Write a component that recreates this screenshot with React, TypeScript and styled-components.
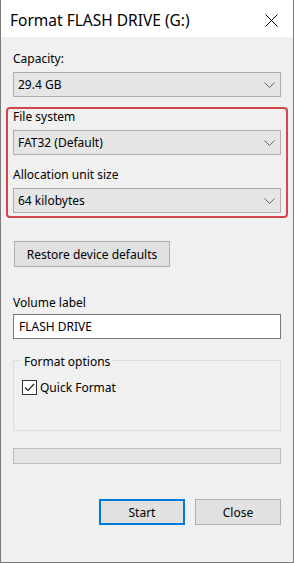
import styled, {createGlobalStyle} from 'styled-components';

const GlobalStyle = createGlobalStyle`
  html, body {
    margin: 0;
    padding: 0;
    background: #ffffff;
  }
  body {
    font-family: 'Noto Sans', 'Open Sans', sans-serif;
    font-size: 12px;
    color: #000000;
  }
`;

const Window = styled('div')`
  width: 294px;
  height: 563px;
  box-sizing: border-box;
  border: 1px solid #7a7a7a;
  border-top: none;
  background: #f0f0f0;
  display: flex;
  flex-direction: column;
`;

const TitleBar = styled('div')`
  height: 37px;
  background: #ffffff;
  display: flex;
  align-items: center;
  justify-content: space-between;
  padding: 3px 15px 0 9px;
  box-sizing: border-box;
`;

const Title = styled('div')`
  font-size: 15.5px;
  color: #000000;
`;

const Body = styled('div')`
  display: flex;
  flex-direction: column;
  padding: 14px 12px 0 12px;
`;

const Label = styled('div')<{$gap?: number}>`
  line-height: 16px;
  height: 16px;
  margin-top: ${(p) => p.$gap ?? 0}px;
  margin-bottom: 5px;
`;

const SelectBox = styled('div')`
  height: 25px;
  box-sizing: border-box;
  background: #e5e5e5;
  border: 1px solid #adadad;
  display: flex;
  align-items: center;
  justify-content: space-between;
  padding: 0 5px 0 4px;
`;

const Highlight = styled('div')`
  margin: 10px -7px 0 -7px;
  padding: 0 5px 3px 5px;
  border: 2px solid #d2454b;
  border-radius: 4px;
  display: flex;
  flex-direction: column;
`;

const Button = styled('div')<{$primary?: boolean; $width: number}>`
  width: ${(p) => p.$width}px;
  height: 26px;
  box-sizing: border-box;
  background: #e1e1e1;
  border: ${(p) => (p.$primary ? '2px solid #0078d7' : '1px solid #adadad')};
  display: flex;
  align-items: center;
  justify-content: center;
`;

const RestoreRow = styled('div')`
  margin-top: 23px;
  padding-left: 1px;
`;

const TextInput = styled('div')`
  height: 25px;
  margin-top: -2px;
  box-sizing: border-box;
  background: #ffffff;
  border: 1px solid #7a7a7a;
  display: flex;
  align-items: center;
  padding-left: 5px;
`;

const Group = styled('div')`
  margin-top: 21px;
  height: 71px;
  box-sizing: border-box;
  border: 1px solid #dcdcdc;
  display: flex;
  flex-direction: column;
  align-items: flex-start;
  padding-left: 8px;
`;

const Legend = styled('div')`
  margin-top: -7px;
  padding: 0 2px;
  line-height: 16px;
  background: #f0f0f0;
`;

const CheckRow = styled('div')`
  margin-top: 9px;
  display: flex;
  align-items: center;
  gap: 3px;
`;

const CheckBox = styled('div')`
  width: 15px;
  height: 15px;
  box-sizing: border-box;
  border: 1px solid #333333;
  background: #ffffff;
  display: flex;
  align-items: center;
  justify-content: center;
`;

const Progress = styled('div')`
  margin-top: 17px;
  height: 16px;
  box-sizing: border-box;
  background: #e6e6e6;
  border: 1px solid #bcbcbc;
`;

const Actions = styled('div')`
  margin-top: 35px;
  display: flex;
  justify-content: flex-end;
  gap: 10px;
`;

const Chevron = () => (
  <svg width="11" height="6" viewBox="0 0 11 6">
    <path d="M0.5 0.5 L5.5 5.5 L10.5 0.5" fill="none" stroke="#606060" strokeWidth="1" />
  </svg>
);

const Select = ({value}: {value: string}) => (
  <SelectBox>
    <span>{value}</span>
    <Chevron />
  </SelectBox>
);

const App = () => {
  return (
    <>
      <GlobalStyle />
      <Window>
        <TitleBar>
          <Title>Format FLASH DRIVE (G:)</Title>
          <svg width="13" height="13" viewBox="0 0 13 13">
            <path d="M0.5 0.5 L12.5 12.5 M12.5 0.5 L0.5 12.5" stroke="#000" strokeWidth="1" />
          </svg>
        </TitleBar>
        <Body>
          <Label>Capacity:</Label>
          <Select value="29.4 GB" />
          <Highlight>
            <Label>File system</Label>
            <Select value="FAT32 (Default)" />
            <Label $gap={12}>Allocation unit size</Label>
            <Select value="64 kilobytes" />
          </Highlight>
          <RestoreRow>
            <Button $width={156}>Restore device defaults</Button>
          </RestoreRow>
          <Label $gap={28}>Volume label</Label>
          <TextInput>FLASH DRIVE</TextInput>
          <Group>
            <Legend>Format options</Legend>
            <CheckRow>
              <CheckBox>
                <svg width="11" height="9" viewBox="0 0 11 9">
                  <path d="M1 4.5 L4 7.5 L10 1" fill="none" stroke="#222" strokeWidth="1.2" />
                </svg>
              </CheckBox>
              <span>Quick Format</span>
            </CheckRow>
          </Group>
          <Progress />
          <Actions>
            <Button $primary $width={86}>Start</Button>
            <Button $width={86}>Close</Button>
          </Actions>
        </Body>
      </Window>
    </>
  );
};

export default App;
